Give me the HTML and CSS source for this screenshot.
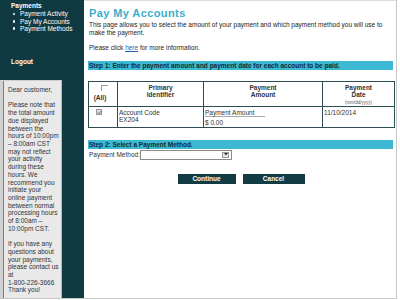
FILE: index.html
```html
<!DOCTYPE html>
<html>
<head>
<meta charset="utf-8">
<link rel="stylesheet" href="styles.css">
</head>
<body>
<div class="page">
  <aside class="sidebar">
    <div class="nav">
      <div class="nav-title">Payments</div>
      <ul class="nav-list">
        <li>Payment Activity</li>
        <li>Pay My Accounts</li>
        <li>Payment Methods</li>
      </ul>
      <div class="logout">Logout</div>
    </div>
    <div class="notice">
      Dear customer,<br><br>
      Please note that<br>
      the total amount<br>
      due displayed<br>
      between the<br>
      hours of 10:00pm<br>
      – 8:00am CST<br>
      may not reflect<br>
      your activity<br>
      during these<br>
      hours. We<br>
      recommend you<br>
      initiate your<br>
      online payment<br>
      between normal<br>
      processing hours<br>
      of 8:00am –<br>
      10:00pm CST.<br><br>
      If you have any<br>
      questions about<br>
      your payments,<br>
      please contact us<br>
      at<br>
      1-800-226-3666<br>
      Thank you!
    </div>
  </aside>
  <main class="main">
    <h1 class="title">Pay My Accounts</h1>
    <p class="intro">This page allows you to select the amount of your payment and which payment method you will use to make the payment.</p>
    <p class="more">Please click <a href="#">here</a> for more information.</p>
    <div class="step step1">Step 1: Enter the payment amount and payment date for each account to be paid.</div>
    <table class="accounts">
      <colgroup>
        <col class="c1"><col class="c2"><col class="c3"><col class="c4">
      </colgroup>
      <tr class="head">
        <th><span class="cb-empty"></span><span class="all">(All)</span></th>
        <th>Primary<br>Identifier</th>
        <th>Payment<br>Amount</th>
        <th>Payment<br>Date<br><span class="fmt">(mm/dd/yyyy)</span></th>
      </tr>
      <tr class="row">
        <td><span class="cb-checked"><svg width="5" height="5" viewBox="0 0 5 5"><path d="M0.8 2.6 L2 3.9 L4.3 0.9" fill="none" stroke="#555" stroke-width="0.8"/></svg></span></td>
        <td>Account Code<br>EX204</td>
        <td><span class="amount-label">Payment Amount</span><span class="amount">$ 0.00</span></td>
        <td>11/10/2014</td>
      </tr>
    </table>
    <div class="step step2">Step 2: Select a Payment Method.</div>
    <div class="method-row">
      <span class="method-label">Payment Method:</span>
      <span class="select"><span class="arrow"><svg width="4" height="3" viewBox="0 0 4 3"><path d="M0 0 H4 L2 2.5 Z" fill="#333"/></svg></span></span>
    </div>
    <div class="actions">
      <span class="btn btn-continue">Continue</span>
      <span class="btn btn-cancel">Cancel</span>
    </div>
  </main>
</div>
</body>
</html>
```
FILE: styles.css
```css
* { box-sizing: border-box; }
html, body { margin: 0; padding: 0; background: #fff; }
body { font-family: "Liberation Sans", Arial, sans-serif; }

.page {
  width: 397px;
  height: 299px;
  border-right: 1px solid #c8c8c8;
  border-bottom: 1px solid #c8c8c8;
  display: flex;
  overflow: hidden;
  background: #fff;
}

.sidebar {
  width: 84px;
  flex: none;
  background: #0f3a42;
  color: #fff;
  display: flex;
  flex-direction: column;
}
.nav {
  padding: 2px 0 0 11px;
  font-size: 6.5px;
  line-height: 7.3px;
}
.nav-title { font-weight: bold; margin-bottom: 1px; }
.nav-list { list-style: none; margin: 0; padding: 0 0 0 9px; }
.nav-list li::before {
  content: "";
  display: inline-block;
  width: 2.5px;
  height: 2.5px;
  border-radius: 50%;
  background: #fff;
  margin: 0 5px 0 -7.5px;
  vertical-align: 1px;
}
.logout { font-weight: bold; margin-top: 26px; }

.notice {
  margin-top: 14.6px;
  flex: 1;
  width: 62px;
  background: #e9e9e9;
  border-left: 3px solid #d2d2d2;
  border-top: 1px solid #cfcfcf;
  border-right: 1px solid #b8b8b8;
  box-shadow: inset 1px 0 0 #7d7d7d;
  padding: 5px 0 0 5px;
  color: #333;
  font-size: 6.5px;
  line-height: 7.7px;
  white-space: nowrap;
}

.main {
  flex: 1;
  padding: 7px 2px 0 4px;
  color: #222;
  font-size: 6.5px;
  border-top: 1px solid #dcdcdc;
}
.title {
  margin: -1px 0 0 1px;
  font-size: 11px;
  line-height: 13px;
  font-weight: bold;
  color: #3aaecb;
  letter-spacing: 0.4px;
}
.intro { margin: 1px 0 0 1px; line-height: 8px; }
.more { margin: 7px 0 0 1px; line-height: 8px; }
.more a { color: #2a5db0; text-decoration: underline; }

.step {
  background: #3cb8d3;
  font-weight: bold;
  color: #112a30;
  height: 9px;
  line-height: 9px;
  padding-left: 1px;
  width: 305px;
}
.step1 { margin-top: 9px; }
.step2 { margin-top: 12px; }

.accounts {
  margin-top: 11px;
  width: 306px;
  border-collapse: collapse;
  table-layout: fixed;
}
.c1 { width: 29px; }
.c2 { width: 86px; }
.c3 { width: 119px; }
.c4 { width: 72px; }
.accounts th, .accounts td {
  border: 1px solid #2e4d53;
  vertical-align: top;
  font-size: 6.5px;
  line-height: 7px;
}
.accounts th {
  height: 25px;
  padding: 1.5px 1px 0;
  text-align: center;
  font-weight: bold;
  color: #333;
}
.accounts td {
  height: 21px;
  padding: 2px 1px 0;
  text-align: left;
  color: #333;
}
.cb-empty {
  display: block;
  width: 7px;
  height: 6px;
  margin: 1px 0 0 11px;
  border-top: 1px solid #9a9a9a;
  border-left: 1px solid #9a9a9a;
}
.all { display: block; margin-top: 3px; padding-right: 6px; }
.fmt { font-size: 4.5px; font-weight: normal; color: #555; line-height: 6px; }
.cb-checked {
  display: block;
  width: 6px;
  height: 6px;
  margin: 0 0 0 6px;
  background: #dcdcdc;
  border: 0.5px solid #999;
}
.cb-checked svg { display: block; }
.amount-label {
  display: block;
  width: 60px;
  border-bottom: 1px solid #aaa;
  line-height: 7px;
}
.amount { display: block; margin-top: 1.5px; }

.method-row {
  display: flex;
  align-items: center;
  height: 11px;
  padding-left: 1px;
  color: #333;
}
.method-label { width: 51px; }
.select {
  width: 92px;
  height: 10px;
  border: 1px solid #8a8a8a;
  background: #fff;
  display: flex;
  align-items: center;
  justify-content: flex-end;
  padding-right: 2px;
}
.arrow {
  width: 7px;
  height: 6px;
  background: #e6e6e6;
  border: 0.5px solid #999;
  display: flex;
  align-items: center;
  justify-content: center;
}
.arrow svg { display: block; }

.actions {
  display: flex;
  justify-content: center;
  gap: 7px;
  margin-top: 14px;
  padding-right: 1px;
}
.btn {
  display: block;
  height: 10px;
  line-height: 10px;
  background: #123b43;
  color: #fff;
  font-weight: bold;
  text-align: center;
  font-size: 6.5px;
}
.btn-continue { width: 58px; }
.btn-cancel { width: 62px; }
```
